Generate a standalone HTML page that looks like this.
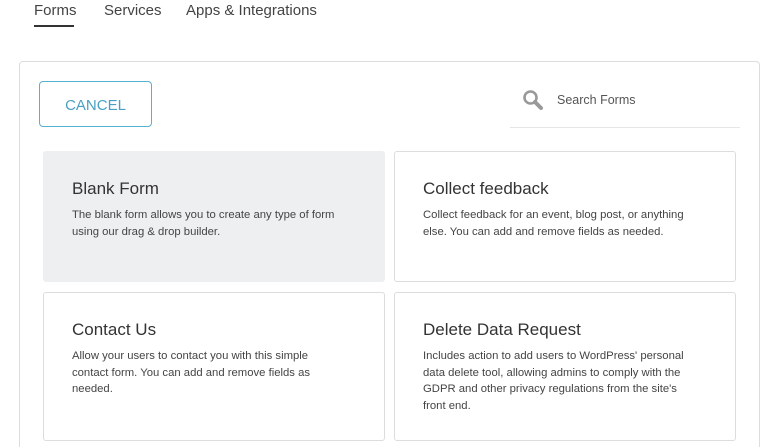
<!DOCTYPE html>
<html><head><style>
html,body{margin:0;width:768px;height:447px;overflow:hidden}
body{background:#fff;font-family:"Liberation Sans",sans-serif;color:#3c3c3c;position:relative}
.tab{position:absolute;top:2px;font-size:15px;color:#444}
.ul{position:absolute;left:34px;top:25px;width:40px;height:2px;background:#333}
.panel{position:absolute;left:19px;top:61px;width:739px;height:400px;border:1px solid #ddd;border-radius:4px}
.cancel{position:absolute;left:39px;top:81px;width:113px;height:46px;border:1px solid #5ab0cf;border-radius:4px;color:#4a9fc4;font-size:15px;text-align:center;line-height:47px;box-sizing:border-box}
.search{position:absolute;left:557px;top:93px;font-size:12.5px;color:#555}
.sline{position:absolute;left:510px;top:127px;width:230px;height:1px;background:#e6e6e6}
.card{position:absolute;border:1px solid #ddd;border-radius:3px;box-sizing:border-box;padding:27px 28px}
.card h3{margin:0 0 8px;font-size:17px;font-weight:normal;color:#333}
.card p{margin:0;width:262px;font-size:11.3px;line-height:16.5px;color:#444}
</style></head><body>
<div class="tab" style="left:34px">Forms</div>
<div class="tab" style="left:104px">Services</div>
<div class="tab" style="left:186px">Apps &amp; Integrations</div>
<div class="ul"></div>
<div class="panel"></div>
<div class="cancel">CANCEL</div>
<svg style="position:absolute;left:521px;top:88px" width="24" height="24" viewBox="0 0 24 24"><circle cx="9.5" cy="9.5" r="6" fill="none" stroke="#999" stroke-width="2.6"/><line x1="14" y1="14" x2="20" y2="20" stroke="#999" stroke-width="4" stroke-linecap="round"/></svg>
<div class="search">Search Forms</div>
<div class="sline"></div>
<div class="card" style="left:43px;top:151px;width:342px;height:131px;background:#eeeff1;border-color:#eeeff1"><h3>Blank Form</h3><p style="width:290px">The blank form allows you to create any type of form<br>using our drag &amp; drop builder.</p></div>
<div class="card" style="left:394px;top:151px;width:342px;height:131px"><h3>Collect feedback</h3><p>Collect feedback for an event, blog post, or anything else. You can add and remove fields as needed.</p></div>
<div class="card" style="left:43px;top:292px;width:342px;height:149px"><h3>Contact Us</h3><p>Allow your users to contact you with this simple contact form. You can add and remove fields as needed.</p></div>
<div class="card" style="left:394px;top:292px;width:342px;height:149px"><h3>Delete Data Request</h3><p>Includes action to add users to WordPress' personal data delete tool, allowing admins to comply with the GDPR and other privacy regulations from the site's front end.</p></div>
</body></html>
